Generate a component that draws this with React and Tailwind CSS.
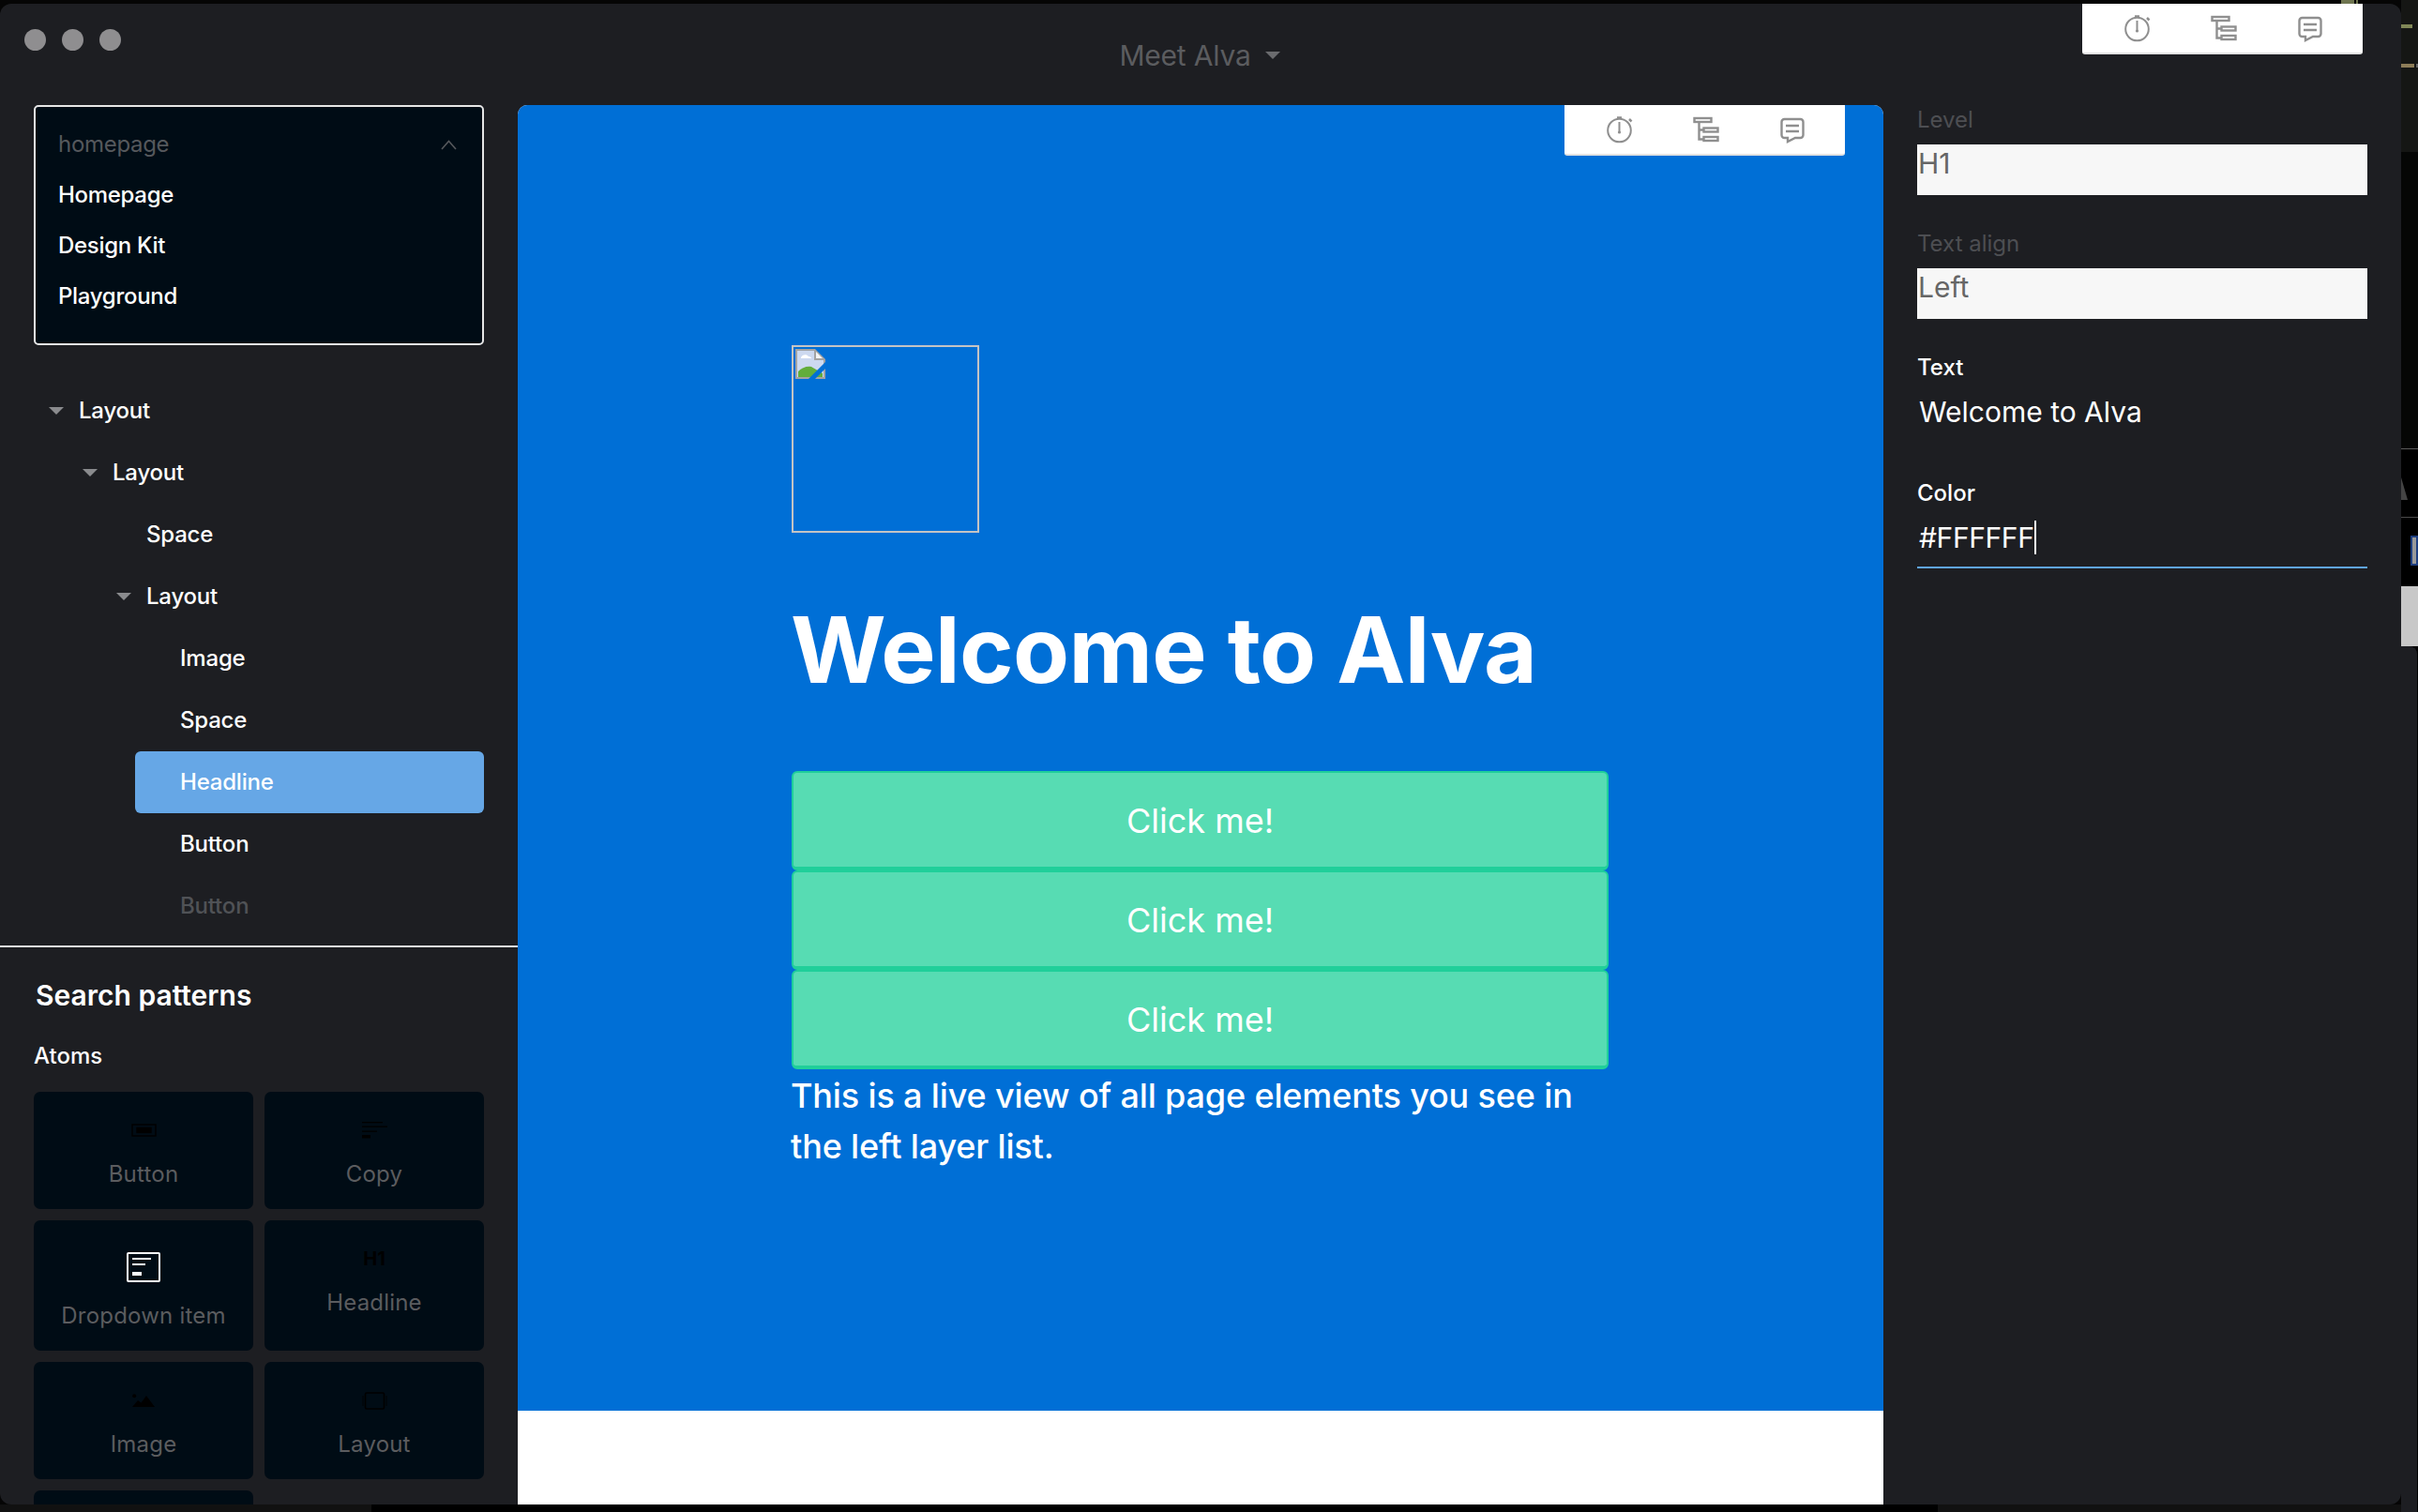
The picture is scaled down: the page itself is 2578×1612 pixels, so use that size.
import React from 'react';

const treeRows = [
  { label: 'Layout', indent: 'ml-[37px]', open: true },
  { label: 'Layout', indent: 'ml-[73px]', open: true },
  { label: 'Space', indent: 'ml-[108px]' },
  { label: 'Layout', indent: 'ml-[109px]', open: true },
  { label: 'Image', indent: 'ml-[144px]' },
  { label: 'Space', indent: 'ml-[144px]' },
  { label: 'Headline', indent: 'ml-[144px]', active: true },
  { label: 'Button', indent: 'ml-[144px]' },
  { label: 'Button', indent: 'ml-[144px]', dim: true },
];

function StopwatchIcon() {
  return (
    <svg width="28" height="30" viewBox="0 0 28 30" fill="none" stroke="#8f8f8f" strokeWidth="2">
      <circle cx="13.5" cy="16" r="12.3" />
      <path d="M11 2.5h5" strokeWidth="2.5" />
      <path d="M24 4l2.5 2.5" strokeWidth="2.5" />
      <path d="M13.5 7v11" />
      <circle cx="13.5" cy="18" r="1.6" fill="#8f8f8f" stroke="none" />
    </svg>
  );
}

function TreeIcon() {
  return (
    <svg width="28" height="30" viewBox="0 0 28 30" fill="none" stroke="#8f8f8f" strokeWidth="2.4">
      <rect x="1.5" y="3" width="18" height="4" />
      <rect x="11.5" y="13.5" width="15" height="4" />
      <rect x="11.5" y="23" width="15" height="4" />
      <path d="M6.5 7v18.5h5M6.5 15.5h5" />
    </svg>
  );
}

function CommentIcon() {
  return (
    <svg width="28" height="30" viewBox="0 0 28 30" fill="none" stroke="#8f8f8f" strokeWidth="2.4">
      <path d="M5.5 4h17a3 3 0 0 1 3 3v14a3 3 0 0 1-3 3h-5.5l-8 4v-4h-3.5a3 3 0 0 1-3-3V7a3 3 0 0 1 3-3z" />
      <path d="M7 11h14M7 17h14" />
    </svg>
  );
}

function Toolbar() {
  return (
    <div className="flex h-[54px] w-[299px] items-center justify-center gap-[64px] rounded-b-[3px] border-b-2 border-[#e2e2e2] bg-white pl-[3px]">
      <StopwatchIcon />
      <TreeIcon />
      <CommentIcon />
    </div>
  );
}

function BrokenImage() {
  return (
    <svg width="32" height="32" viewBox="0 0 32 32">
      <path d="M0 0h21l11 11v21H0z" fill="#a3a3a3" />
      <path d="M2 2h18v10h10v18H2z" fill="#cdd9f0" />
      <path d="M22 3l7 7h-7z" fill="#f4f4f4" />
      <path d="M6 9c1-3 6-4 8-1 2 0 3 1 3 2H6z" fill="#ffffff" />
      <path d="M3 30v-6c4-4 9-6 14-5l12 7v4z" fill="#62ad3a" />
      <path d="M14 32L32 14v7L21 32z" fill="#006fd6" />
    </svg>
  );
}

function ButtonGlyph() {
  return (
    <svg width="27" height="14" viewBox="0 0 27 14" fill="none" stroke="#000000" strokeWidth="1.4">
      <rect x="1" y="1" width="25" height="12" />
      <rect x="6" y="4.5" width="15" height="5" fill="#000000" />
    </svg>
  );
}

function CopyGlyph() {
  return (
    <svg width="27" height="18" viewBox="0 0 27 18" fill="#000000">
      <rect x="0" y="0" width="22" height="1.3" />
      <rect x="0" y="4.5" width="27" height="1.3" />
      <rect x="0" y="9.5" width="16" height="1.3" />
      <rect x="0" y="14" width="9" height="3.5" />
    </svg>
  );
}

function DropdownGlyph() {
  return (
    <svg width="36" height="32" viewBox="0 0 36 32" fill="#ffffff">
      <rect x="1" y="1" width="34" height="30" rx="1" fill="none" stroke="#ffffff" strokeWidth="2" />
      <rect x="6" y="6" width="20" height="2" />
      <rect x="6" y="12" width="14" height="2" />
      <rect x="6" y="21" width="10" height="4" />
    </svg>
  );
}

function ImageGlyph() {
  return (
    <svg width="24" height="14" viewBox="0 0 24 14" fill="#000000">
      <circle cx="2.2" cy="2.2" r="2" />
      <path d="M0 14L6 7l3.5 2.5L15 2l9 12z" />
    </svg>
  );
}

function LayoutGlyph() {
  return (
    <svg width="27" height="19" viewBox="0 0 27 19" fill="none" stroke="#000000">
      <rect x="3.5" y="1" width="20" height="17" rx="1.5" strokeWidth="1.6" />
      <path d="M1 4v11M26 4v11" strokeWidth="0.8" />
    </svg>
  );
}

function Tile({ label, children, tall }) {
  return (
    <div className="flex flex-col items-center rounded-[7px] bg-[#000c15] pt-[29px] pb-[22px]">
      <div className={tall ? 'mb-[16px] flex h-[42px] items-center' : 'mb-[20px] flex h-[24px] items-center'}>
        {children}
      </div>
      <span className="h-[30px] text-[24px] leading-[30px] tracking-[0.2px] text-[#5b5c5f]">{label}</span>
    </div>
  );
}

function DimField({ label, value, className }) {
  return (
    <div className={className}>
      <div className="mb-[11px] text-[24px] leading-[30px] text-[#4d4e52]">{label}</div>
      <div className="h-[54px] bg-[#f7f7f7] pl-[1px] text-[30px] leading-[40px] text-[#666666]">{value}</div>
    </div>
  );
}

export default function App() {
  return (
    <div className="flex h-[1612px] w-[2578px] overflow-hidden bg-[#050505] font-['Inter',sans-serif]">
      <div className="flex w-[2560px] flex-col">
        {/* bits of the desktop above the window */}
        <div className="flex h-[4px] justify-end gap-[2px] pr-[46px]">
          <div className="h-[4px] w-[14px] bg-[#6f7550]" />
          <div className="h-[4px] w-[2px] bg-[#6f7550]" />
        </div>

        <div className="flex h-[1600px] flex-col overflow-hidden rounded-[12px] bg-[#1d1e22]">
          {/* title bar */}
          <div className="grid h-[108px] shrink-0 grid-cols-[1fr_auto_1fr] items-start">
            <div className="flex gap-[17px] pt-[27px] pl-[26px]">
              <div className="h-[23px] w-[23px] rounded-full bg-[#8f8e90]" />
              <div className="h-[23px] w-[23px] rounded-full bg-[#8f8e90]" />
              <div className="h-[23px] w-[23px] rounded-full bg-[#8f8e90]" />
            </div>
            <div className="flex items-center gap-[15px] pt-[37px] pr-[2px] text-[30px] leading-[36px] tracking-[-0.2px] text-[#5b5c5f]">
              Meet Alva
              <div className="h-0 w-0 border-x-[8px] border-t-[8px] border-x-transparent border-t-[#6a6b6e]" />
            </div>
            <div className="flex justify-end pr-[41px]">
              <Toolbar />
            </div>
          </div>

          <div className="flex min-h-0 flex-1">
            {/* left sidebar */}
            <div className="flex w-[552px] shrink-0 flex-col">
              <div className="mx-[36px] h-[256px] shrink-0 rounded-[5px] border-2 border-[#e6e6e6] bg-[#000c15] pt-[13px] pl-[24px] text-[24px] tracking-[-0.3px]">
                <div className="flex h-[54px] items-center justify-between pr-[27px] text-[#55585c]">
                  homepage
                  <svg width="17" height="11" viewBox="0 0 17 11" fill="none" stroke="#55585c" strokeWidth="1.6">
                    <path d="M1 10l7.5-8.5L16 10" />
                  </svg>
                </div>
                <div className="flex h-[54px] items-center font-medium text-white">Homepage</div>
                <div className="flex h-[54px] items-center font-medium text-white">Design Kit</div>
                <div className="flex h-[54px] items-center font-medium text-white">Playground</div>
              </div>

              <div className="mt-[37px] mr-[36px] shrink-0">
                {treeRows.map((row, idx) => (
                  <div
                    key={idx}
                    className={`flex h-[66px] items-center rounded-[6px] text-[24px] font-medium tracking-[-0.2px] ${row.indent} ${row.active ? 'bg-[#66a7e6] text-white' : row.dim ? 'text-[#505256]' : 'text-white'} ${row.open ? 'pl-[15px]' : 'pl-[48px]'}`}
                  >
                    {row.open && (
                      <div className="mr-[16px] h-0 w-0 border-x-[8px] border-t-[8px] border-x-transparent border-t-[#8a8b8e]" />
                    )}
                    {row.label}
                  </div>
                ))}
              </div>

              <div className="mt-[9px] h-[2px] shrink-0 bg-[#e6e6e6]" />

              <div className="min-h-0 flex-1 overflow-hidden px-[36px]">
                <div className="mt-[33px] ml-[2px] text-[30px] leading-[36px] font-semibold text-white">Search patterns</div>
                <div className="mt-[32px] mb-[23px] text-[24px] leading-[30px] font-medium text-white">Atoms</div>
                <div className="grid grid-cols-2 gap-[12px]">
                  <Tile label="Button"><ButtonGlyph /></Tile>
                  <Tile label="Copy"><CopyGlyph /></Tile>
                  <Tile label="Dropdown item" tall><DropdownGlyph /></Tile>
                  <Tile label="Headline">
                    <span className="text-[20px] leading-[24px] font-bold text-black">H1</span>
                  </Tile>
                  <Tile label="Image"><ImageGlyph /></Tile>
                  <Tile label="Layout"><LayoutGlyph /></Tile>
                  <Tile label=""><span /></Tile>
                </div>
              </div>
            </div>

            {/* canvas */}
            <div className="flex w-[1456px] shrink-0 flex-col overflow-hidden rounded-t-[10px] bg-white">
              <div className="h-[1392px] shrink-0 bg-[#006fd6] text-white">
                <div className="flex justify-end pr-[41px]">
                  <Toolbar />
                </div>
                <div className="ml-[292px] w-[871px]">
                  <div className="mt-[202px] h-[200px] w-[200px] border-2 border-[#c4c4c4] p-[2px]">
                    <BrokenImage />
                  </div>
                  <h1 className="mt-[65px] -ml-[1px] text-[98px] leading-[120px] font-bold tracking-[-0.6px]">Welcome to Alva</h1>
                  <div className="mt-[69px]">
                    {[0, 1, 2].map((i) => (
                      <div
                        key={i}
                        className="flex h-[106px] items-center justify-center rounded-[6px] border-2 border-b-4 border-[#20cf9a] bg-[#57dcb3] pt-[2px] text-[36px] text-white"
                      >
                        Click me!
                      </div>
                    ))}
                  </div>
                  <p className="mt-[1px] -ml-[1px] text-[36px] leading-[54px] font-medium tracking-[-0.15px]">
                    This is a live view of all page elements you see in the left layer list.
                  </p>
                </div>
              </div>
            </div>

            {/* properties */}
            <div className="min-w-0 flex-1 pt-[1px] pl-[36px]">
              <div className="w-[480px]">
                <DimField label="Level" value="H1" />
                <DimField label="Text align" value="Left" className="mt-[37px]" />
                <div className="mt-[37px] text-[24px] leading-[30px] font-medium text-white">Text</div>
                <div className="mt-[14px] pl-[2px] text-[30px] leading-[36px] text-white">Welcome to Alva</div>
                <div className="mt-[54px] text-[24px] leading-[30px] font-medium text-white">Color</div>
                <div className="mt-[14px] h-[51px] border-b-2 border-[#5fa4e8] pl-[2px] text-[30px] leading-[36px] tracking-[-0.4px] text-white">
                  <span className="border-r-2 border-white pr-[1px]">#FFFFFF</span>
                </div>
              </div>
            </div>
          </div>
        </div>

        {/* desktop below the window */}
        <div className="flex h-[8px] shrink-0">
          <div className="w-[396px] bg-[#111111]" />
          <div className="w-[1670px] bg-black" />
          <div className="flex-1 bg-[#111111]" />
        </div>
      </div>

      {/* sliver of another window on the right */}
      <div className="flex min-w-0 flex-1 flex-col">
        <div className="h-[162px] shrink-0 bg-[#151614] pt-[26px]">
          <div className="h-[4px] w-[12px] bg-[#808757]" />
          <div className="mt-[38px] flex gap-[2px]">
            <div className="h-[4px] w-[14px] bg-[#8d7d58]" />
            <div className="h-[4px] w-[2px] bg-[#666666]" />
          </div>
        </div>
        <div className="h-[316px] shrink-0 bg-[#050605]" />
        <div className="h-[73px] shrink-0 border-t border-[#5a5a5a] bg-black">
          <svg width="18" height="72" viewBox="0 0 18 72">
            <path d="M0 30l7 24H0z" fill="#444444" />
          </svg>
        </div>
        <div className="h-[74px] shrink-0 border-t border-[#4a4a4a] bg-black pt-[19px] pl-[10px]">
          <div className="h-[32px] w-[8px] border-2 border-[#1f3f80] bg-[#9a9a9a]" />
        </div>
        <div className="h-[64px] shrink-0 bg-[#c8c8c8]" />
        <div className="min-h-0 flex-1 bg-black pr-[1px]">
          <div className="h-full rounded-tr-[8px] bg-[#1d1e22]" />
        </div>
      </div>
    </div>
  );
}
